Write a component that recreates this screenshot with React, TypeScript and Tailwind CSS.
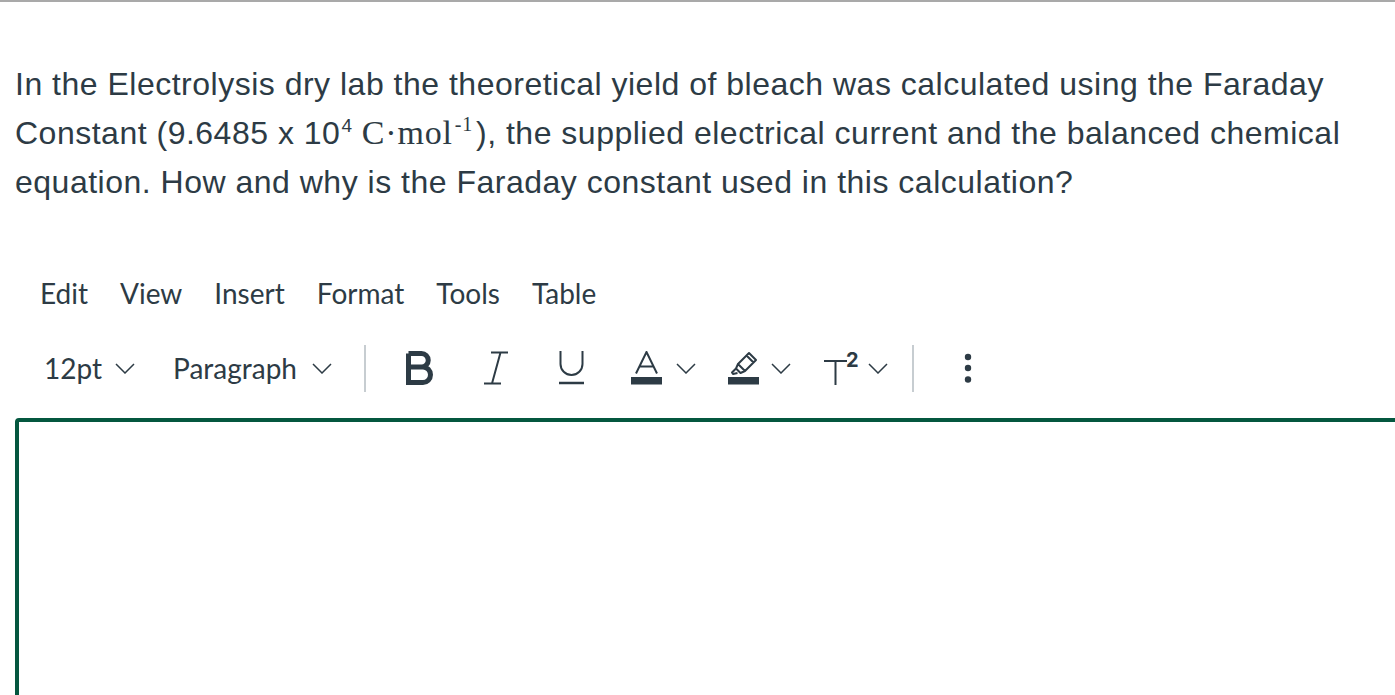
function Chevron() {
  return (
    <svg width="20" height="11" viewBox="0 0 20 11" className="shrink-0">
      <path d="M1 1 L10 10 L19 1" fill="none" stroke="#2d3b45" strokeWidth="1.5" />
    </svg>
  );
}

function Separator() {
  return <div className="w-[2px] h-[47px] bg-[#c7cdd1] shrink-0" />;
}

export default function App() {
  return (
    <div className="h-[695px] overflow-hidden bg-white border-t-2 border-[#a9a9a9]">
      <p className="pl-[15px] pt-[58px] pr-[10px] whitespace-nowrap text-[32px] tracking-[0.5px] leading-[49px] text-[#2d3b45] font-['Liberation_Sans',Arial,sans-serif]">
        In the Electrolysis dry lab the theoretical yield of bleach was calculated using the Faraday
        <br />
        Constant (9.6485 x 10
        <sup className="text-[19px] ml-[1px] top-[-12px] leading-none">4</sup>{" "}
        <span className="text-[34px] leading-none font-['Liberation_Serif',serif] tracking-[0.8px]">
          C·mol<sup className="text-[20px] ml-[2px] top-[-13px] leading-none">-1</sup>
        </span>
        <span className="ml-[3px]">), the supplied electrical current and the balanced chemical</span>
        <br />
        equation. How and why is the Faraday constant used in this calculation?
      </p>

      <div className="mt-[66px] pl-[40px] flex gap-[32px] text-[28px] leading-[40px] text-[#2d3b45] font-['Lato',sans-serif]">
        <span>Edit</span>
        <span>View</span>
        <span>Insert</span>
        <span>Format</span>
        <span>Tools</span>
        <span>Table</span>
      </div>

      <div className="mt-[30px] h-[50px] flex items-center text-[28px] text-[#2d3b45] font-['Lato',sans-serif]">
        <span className="ml-[44px]">12pt</span>
        <span className="ml-[13px]"><Chevron /></span>
        <span className="ml-[38px]">Paragraph</span>
        <span className="ml-[15px]"><Chevron /></span>
        <span className="ml-[32px]"><Separator /></span>

        {/* bold */}
        <svg width="27" height="34" viewBox="0 0 27 34" className="ml-[40px] shrink-0">
          <path
            d="M2.5 2.5 V31.5 H17 A7.5 7.75 0 0 0 17 16 H2.5 M2.5 2.5 H15.5 A6.75 6.75 0 0 1 15.5 16"
            fill="none"
            stroke="#2d3b45"
            strokeWidth="5"
          />
        </svg>

        {/* italic */}
        <svg width="24" height="34" viewBox="0 0 24 34" className="ml-[51px] shrink-0">
          <path d="M7 1.5 H24 M0 32.5 H17 M16.5 1.5 L8 32.5" fill="none" stroke="#2d3b45" strokeWidth="2" />
        </svg>

        {/* underline */}
        <svg width="25" height="34" viewBox="0 0 25 34" className="ml-[51px] shrink-0">
          <path d="M1.5 0 V13 A11 11 0 0 0 23.5 13 V0" fill="none" stroke="#2d3b45" strokeWidth="2" />
          <path d="M0 32 H25" stroke="#2d3b45" strokeWidth="2.5" />
        </svg>

        {/* text colour */}
        <svg width="31" height="34" viewBox="0 0 31 34" className="ml-[47px] shrink-0">
          <path d="M5 22.5 L15.5 1 L26 22.5 M8.5 15.5 H22.5" fill="none" stroke="#2d3b45" strokeWidth="2" />
          <rect x="0" y="26" width="31" height="7.5" fill="#2d3b45" />
        </svg>
        <span className="ml-[14px]"><Chevron /></span>

        {/* highlight */}
        <svg width="31" height="34" viewBox="0 0 31 34" className="ml-[32px] shrink-0">
          <path
            d="M21 2 L28 9 L17 20 L10 13 Z M18.5 4.5 L25.5 11.5 M10 13 L8 17.5 L12.5 22 L17 20 M8 17.5 L4 21.5 L5 23 L9.5 22"
            fill="none"
            stroke="#2d3b45"
            strokeWidth="2"
            strokeLinejoin="round"
          />
          <rect x="0" y="26" width="31" height="7.5" fill="#2d3b45" />
        </svg>
        <span className="ml-[12px]"><Chevron /></span>

        {/* superscript */}
        <svg width="38" height="36" viewBox="0 0 38 36" className="ml-[33px] shrink-0 overflow-visible">
          <path d="M0 11 H23 M11.5 11 V35" fill="none" stroke="#2d3b45" strokeWidth="2" />
          <text x="22" y="17" fontSize="20" fontWeight="700" fill="#2d3b45" fontFamily="Inter, sans-serif">
            2
          </text>
        </svg>
        <span className="ml-[6px]"><Chevron /></span>

        <span className="ml-[24px]"><Separator /></span>

        <svg width="8" height="30" viewBox="0 0 8 30" className="ml-[50px] shrink-0">
          <circle cx="4" cy="4" r="3.2" fill="#2d3b45" />
          <circle cx="4" cy="15" r="3.2" fill="#2d3b45" />
          <circle cx="4" cy="26.5" r="3.2" fill="#2d3b45" />
        </svg>
      </div>

      <div className="mt-[25px] ml-[15px] w-[1420px] h-[400px] border-4 border-[#04573f] rounded-[4px]" />
    </div>
  );
}
